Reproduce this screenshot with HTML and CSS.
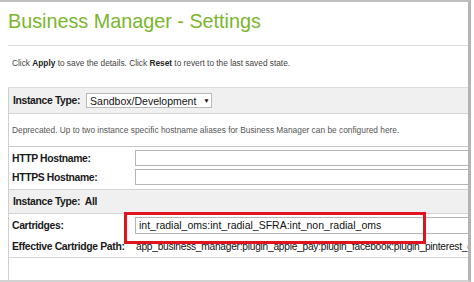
FILE: index.html
```html
<!DOCTYPE html>
<html>
<head>
<meta charset="utf-8">
<link rel="stylesheet" href="styles.css">
</head>
<body>
<div class="frame">
  <div class="page">
    <h1 class="title">Business Manager - Settings</h1>
    <p class="info">Click <b>Apply</b> to save the details. Click <b>Reset</b> to revert to the last saved state.</p>
    <div class="box">
      <div class="row head">
        <span class="lbl">Instance Type:</span>
        <span class="select">Sandbox/Development <span class="arrow">▼</span></span>
      </div>
      <div class="row note">
        <span><span class="dep">Deprecated.</span> Up to two instance specific hostname aliases for Business Manager can be configured here.</span>
      </div>
      <div class="row field first">
        <span class="lbl col">HTTP Hostname:</span>
        <span class="input"></span>
      </div>
      <div class="row field second">
        <span class="lbl col">HTTPS Hostname:</span>
        <span class="input"></span>
      </div>
      <div class="row head all">
        <span class="lbl">Instance Type:&nbsp; All</span>
      </div>
      <div class="row field cart">
        <span class="lbl col">Cartridges:</span>
        <span class="input val">int_radial_oms:int_radial_SFRA:int_non_radial_oms</span>
        <span class="highlight"></span>
      </div>
      <div class="row path">
        <span class="lbl col">Effective Cartridge Path:</span>
        <span class="pathval">app_business_manager:plugin_apple_pay:plugin_facebook:plugin_pinterest_c</span>
      </div>
      <div class="row empty"></div>
    </div>
  </div>
</div>
</body>
</html>
```
FILE: styles.css
```css
html, body {
  margin: 0;
  padding: 0;
  background: #ffffff;
}
body {
  width: 474px;
  height: 282px;
  overflow: hidden;
  font-family: "Liberation Sans", Arial, sans-serif;
  color: #222;
}
.frame {
  width: 471px;
  height: 282px;
  border-top: 2px solid #bdbdbd;
  border-right: 3px solid #b4b4b4;
  border-bottom: 2px solid #d2d2d2;
  box-sizing: border-box;
  overflow: hidden;
}
.page {
  padding-left: 8px;
}
.title {
  margin: 0;
  padding: 7px 0 0 0;
  height: 36px;
  font-size: 19.8px;
  font-weight: normal;
  line-height: 24px;
  color: #7ab62c;
  border-bottom: 1px solid #dcdcdc;
  box-sizing: content-box;
}
.info {
  margin: 0;
  height: 41px;
  line-height: 34px;
  padding-left: 4px;
  font-size: 8.3px;
  color: #444;
  border-bottom: 1px solid #dcdcdc;
  white-space: nowrap;
}
.info b { color: #222; }
.box {
  border-left: 1px solid #cfcfcf;
  position: relative;
}
.row {
  display: flex;
  align-items: center;
  border-bottom: 1px solid #d4d4d4;
  box-sizing: border-box;
}
.lbl {
  font-weight: bold;
  font-size: 10.4px;
  letter-spacing: -0.35px;
  color: #1a1a1a;
  white-space: nowrap;
}
.col {
  width: 126px;
  flex: none;
  padding-left: 3px;
  box-sizing: border-box;
}
.head {
  height: 26px;
  background: #f0f0f0;
  padding-left: 4px;
}
.head .lbl { margin-right: 6px; }
.select {
  display: inline-flex;
  align-items: center;
  height: 15px;
  width: 126px;
  box-sizing: border-box;
  border: 1px solid #b9b9b9;
  background: #fff;
  font-size: 10.5px;
  padding-left: 3px;
  color: #111;
  white-space: nowrap;
}
.arrow {
  font-size: 6.5px;
  margin-left: 7px;
}
.note {
  height: 33px;
  padding-left: 3px;
  font-size: 8.35px;
  color: #555;
  border-bottom-color: #c8c8c8;
  white-space: nowrap;
}
.dep { color: #555; }
.field .input {
  flex: 1;
  height: 16px;
  box-sizing: border-box;
  border: 1px solid #b5b5b5;
  border-right: none;
  background: #fff;
}
.first {
  height: 20px;
  border-bottom: none;
  padding-top: 2px;
}
.second {
  height: 23px;
  padding-bottom: 2px;
}
.all {
  height: 24px;
}
.cart {
  height: 22px;
  border-bottom: none;
  position: relative;
}
.cart .input {
  height: 17px;
  font-size: 10.5px;
  line-height: 15px;
  padding-left: 3px;
  color: #111;
  white-space: nowrap;
}
.highlight {
  position: absolute;
  left: 115px;
  top: -2px;
  width: 302px;
  height: 32px;
  border: 3px solid #e0141e;
  box-sizing: border-box;
}
.path {
  height: 22px;
  align-items: flex-start;
  padding-top: 5px;
  overflow: hidden;
}
.pathval {
  font-size: 10.2px;
  letter-spacing: -0.25px;
  color: #111;
  white-space: nowrap;
  margin-left: 1px;
}
.empty {
  height: 30px;
  border-bottom: none;
}
```
